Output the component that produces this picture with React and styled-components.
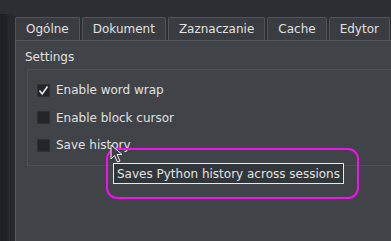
import styled, { createGlobalStyle } from "styled-components";

const GlobalStyle = createGlobalStyle`
    html, body {
        margin: 0;
        padding: 0;
        background: #2b2e32;
        overflow: hidden;
    }
    #root {
        width: 391px;
        height: 241px;
    }
`

const tabs = ["Ogólne", "Dokument", "Zaznaczanie", "Cache", "Edytor"];

const options = [
    { label: "Enable word wrap", checked: true },
    { label: "Enable block cursor", checked: false },
    { label: "Save history", checked: false },
];

const App = () =>
{
    return (
    <>
        <GlobalStyle />
        <Window>
            <Rail />
            <Gutter />
            <Main>
                <TabBar>
                    {tabs.map((t) => <Tab key={t}>{t}</Tab>)}
                </TabBar>
                <Panel>
                    <GroupTitle>Settings</GroupTitle>
                    <GroupBox>
                        {options.map((o) => (
                            <OptionRow key={o.label}>
                                <Box>
                                    {o.checked && (
                                        <svg width="11" height="11" viewBox="0 0 11 11">
                                            <path d="M1.5 5.5 L4.2 9 L9.5 1.5" fill="none" stroke="#e8e8e8" strokeWidth="1.6" />
                                        </svg>
                                    )}
                                </Box>
                                <OptionLabel>{o.label}</OptionLabel>
                            </OptionRow>
                        ))}
                    </GroupBox>
                </Panel>
            </Main>
            <Highlight />
            <Tooltip>Saves Python history across sessions</Tooltip>
            <Cursor width="14" height="20" viewBox="0 0 14 20">
                <path d="M1 1 L1 15 L4.5 11.5 L7.5 18 L10 17 L7 10.5 L12 10.5 Z" fill="#3a3d41" stroke="#f2f2f2" strokeWidth="1" strokeLinejoin="round" />
            </Cursor>
        </Window>
    </>)
}

const Window = styled.div`
    position: relative;
    width: 391px;
    height: 241px;
    padding-top: 14px;
    box-sizing: border-box;
    display: flex;
    background: #2b2e32;
    font-family: "DejaVu Sans", sans-serif;
    overflow: hidden;
`

const Rail = styled.div`
    width: 7px;
    background: #1e2125;
`

const Gutter = styled.div`
    width: 8px;
    background: #25282c;
`

const Main = styled.div`
    flex: 1;
    display: flex;
    flex-direction: column;
    min-width: 0;
`

const TabBar = styled.div`
    display: flex;
    gap: 2px;
    padding-top: 3px;
    white-space: nowrap;
`

const Tab = styled.div`
    flex: none;
    height: 22px;
    padding: 0 10px;
    display: flex;
    align-items: center;
    background: #393c40;
    border: 1px solid #505357;
    border-bottom: none;
    border-radius: 2px 2px 0 0;
    color: #e0e0e0;
    font-size: 12px;
`

const Panel = styled.div`
    flex: 1;
    background: #404347;
    border-top: 1px solid #55585c;
    border-left: 1px solid #55585c;
    padding: 9px 0 0 9px;
`

const GroupTitle = styled.div`
    color: #e0e0e0;
    font-size: 12px;
    line-height: 15px;
    margin-bottom: 4px;
`

const GroupBox = styled.div`
    margin-left: 2px;
    border: 1px solid #4c4f53;
    border-right: none;
    height: 97px;
    box-sizing: border-box;
    padding: 13px 0 0 9px;
    display: flex;
    flex-direction: column;
    gap: 13.5px;
`

const OptionRow = styled.div`
    display: flex;
    align-items: center;
    gap: 6px;
    height: 14px;
`

const Box = styled.div`
    width: 13px;
    height: 13px;
    background: #232629;
    border: 1px solid #2e3134;
    box-sizing: border-box;
    display: flex;
    align-items: center;
    justify-content: center;
`

const OptionLabel = styled.span`
    color: #e0e0e0;
    font-size: 12px;
`

const Highlight = styled.div`
    position: absolute;
    left: 106px;
    top: 148px;
    width: 253px;
    height: 51px;
    box-sizing: border-box;
    border: 2px solid #f010f0;
    border-radius: 11px;
`

const Tooltip = styled.div`
    position: absolute;
    left: 113px;
    top: 163px;
    height: 21px;
    box-sizing: border-box;
    padding: 0 3px;
    display: flex;
    align-items: center;
    background: #31363b;
    border: 1px solid #e8e8e8;
    color: #e2e2e2;
    font-size: 12px;
    white-space: nowrap;
`

const Cursor = styled.svg`
    position: absolute;
    left: 110px;
    top: 144px;
`

export default App;
